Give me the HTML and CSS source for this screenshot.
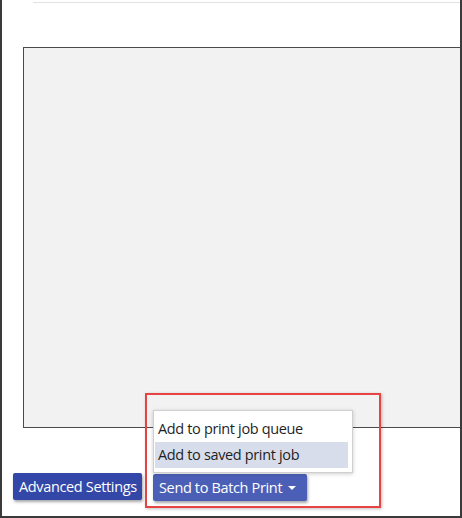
FILE: index.html
```html
<!DOCTYPE html>
<html lang="en">

<head>
    <meta charset="UTF-8">
    <meta name="viewport" content="width=device-width, initial-scale=1.0">
    <title>Batch Print</title>
    <link rel="stylesheet" href="styles.css">
</head>

<body>
    <div class="frame">
        <div class="top-line"></div>

        <!-- Preview area -->
        <div class="preview"></div>

        <div class="actions">
            <button type="button" class="button button-dark">Advanced Settings</button>

            <div class="batch">
                <button type="button" class="button button-light">
                    Send to Batch Print
                    <span class="caret"></span>
                </button>

                <ul class="menu">
                    <li class="menu-item">Add to print job queue</li>
                    <li class="menu-item active">Add to saved print job</li>
                </ul>
            </div>
        </div>

        <!-- Annotation box -->
        <div class="highlight"></div>
    </div>
</body>

</html>
```

FILE: styles.css
```css
body {
    margin: 0;
    padding: 0;
    background: #ffffff;
    font-family: "Open Sans", "Noto Sans", Arial, sans-serif;
}

.frame {
    position: relative;
    width: 462px;
    height: 518px;
    box-sizing: border-box;
    border-left: 2px solid #3a3a3a;
    border-right: 2px solid #3a3a3a;
    border-bottom: 2px solid #3a3a3a;
    padding-top: 2px;
}

.top-line {
    height: 1px;
    margin-left: 31px;
    background: #e2e2e2;
}

.preview {
    margin-top: 44px;
    margin-left: 21px;
    height: 379px;
    background: #f2f2f2;
    border: 1px solid #4a4a4a;
    border-right: none;
}

.actions {
    display: flex;
    align-items: flex-start;
    gap: 11px;
    margin-top: 45px;
    margin-left: 11px;
}

.button {
    height: 27px;
    padding: 0 6px;
    border: none;
    border-radius: 2px;
    color: #ffffff;
    font-family: inherit;
    font-size: 14.5px;
    letter-spacing: -0.35px;
    line-height: 27px;
    white-space: nowrap;
    cursor: pointer;
    box-shadow: 1px 2px 3px rgba(0, 0, 0, 0.35);
}

.button-dark {
    width: 129px;
    background-color: #3247a8;
}

.button-light {
    display: flex;
    align-items: center;
    gap: 6px;
    width: 154px;
    margin-top: 1px;
    background-color: #4b5fb6;
}

.caret {
    width: 0;
    height: 0;
    border-left: 4px solid transparent;
    border-right: 4px solid transparent;
    border-top: 4px solid #ffffff;
}

.batch {
    position: relative;
}

.menu {
    position: absolute;
    left: 0;
    bottom: 28px;
    width: 200px;
    box-sizing: border-box;
    margin: 0;
    padding: 5px 4px 4px 1px;
    list-style: none;
    background: #ffffff;
    border: 1px solid #cfcfcf;
    box-shadow: 0 1px 4px rgba(0, 0, 0, 0.2);
}

.menu-item {
    height: 26px;
    padding-left: 3px;
    font-size: 14.5px;
    letter-spacing: -0.35px;
    line-height: 26px;
    color: #1f1f1f;
    white-space: nowrap;
}

.menu-item.active {
    background: #d8ddec;
}

.highlight {
    position: absolute;
    left: 143px;
    top: 393px;
    width: 236px;
    height: 115px;
    box-sizing: border-box;
    border: 2px solid #e84343;
    box-shadow: 1px 1px 3px rgba(0, 0, 0, 0.25);
    pointer-events: none;
}
```
